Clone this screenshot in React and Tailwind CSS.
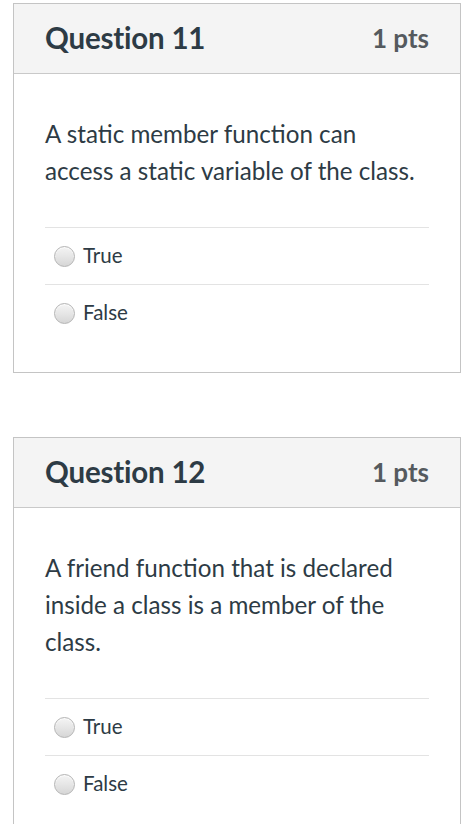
import React from "react";

function Radio() {
  return (
    <span className="inline-block w-[21px] h-[21px] rounded-full border border-[#b4b4b4] bg-[linear-gradient(180deg,#f4f4f4_0%,#e6e6e6_50%,#d6d6d6_100%)] shadow-[inset_0_1px_1px_rgba(255,255,255,0.8)] shrink-0" />
  );
}

function Option({ label }) {
  return (
    <div className="flex items-center h-[57px] border-t border-[#e3e3e3] pl-[9px]">
      <Radio />
      <span className="ml-[8px] text-[20.5px] text-[#2d3b45] leading-none -mt-[2px]">{label}</span>
    </div>
  );
}

function Card({ num, text }) {
  return (
    <div className="mx-[13px] border border-[#c4c4c4]">
      <div className="h-[70px] bg-[#f4f4f4] border-b border-[#c9c9c9] flex items-center justify-between pl-[31px] pr-[31px]">
        <span className="text-[29.5px] font-bold text-[#2d3b45] tracking-[-0.2px]">Question {num}</span>
        <span className="text-[26px] font-bold text-[#555a5e]">1 pts</span>
      </div>
      <div className="px-[31px] pt-[41px] pb-[31px]">
        <p className="w-[375px] text-[24.2px] leading-[37px] text-[#2d3b45] mb-[38px]">{text}</p>
        <Option label="True" />
        <Option label="False" />
      </div>
    </div>
  );
}

export default function App() {
  return (
    <div className="bg-white min-h-[824px] pt-[3px] font-['Lato','Noto_Sans',sans-serif]">
      <Card num={11} text="A static member function can access a static variable of the class." />
      <div className="h-[64px]" />
      <Card num={12} text="A friend function that is declared inside a class is a member of the class." />
    </div>
  );
}
